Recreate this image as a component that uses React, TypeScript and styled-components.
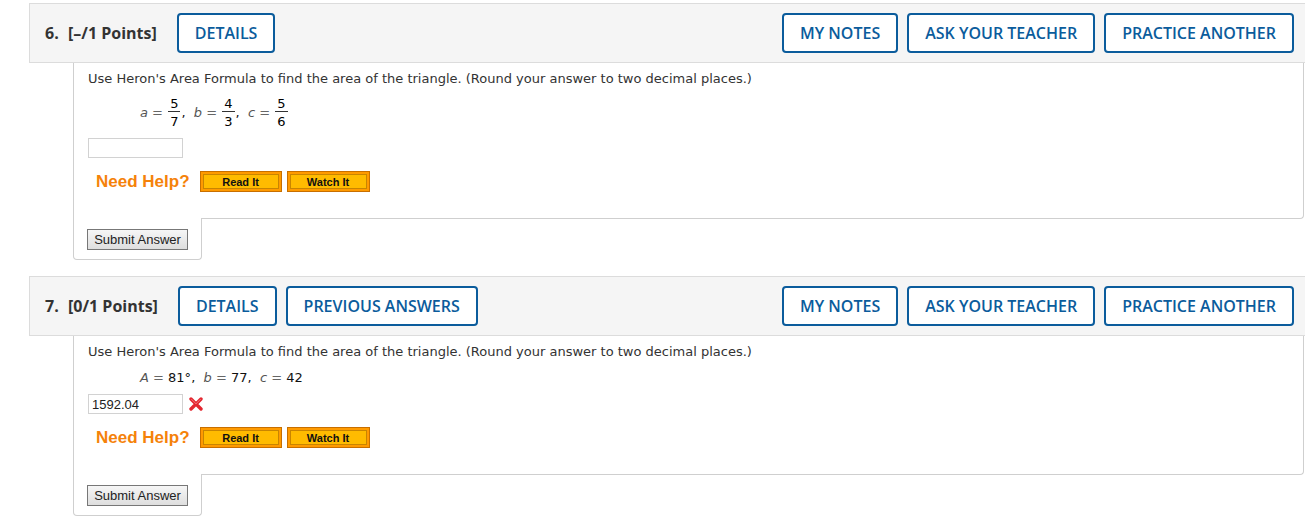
import React from "react";
import styled, { createGlobalStyle } from "styled-components";

const GlobalStyle = createGlobalStyle`
	html, body {
		margin: 0;
		padding: 0;
		background: #fff;
		overflow: hidden;
	}
	body {
		font-family: "Open Sans", "Liberation Sans", sans-serif;
	}
`;

const BLUE = "#0b5c9c";

type Term = { name: string; value?: string; num?: string; den?: string };

type QuestionData = {
	number: string;
	points: string;
	extraButton?: string;
	terms: Term[];
	answer: string;
	wrong: boolean;
};

const questions: QuestionData[] = [
	{
		number: "6.",
		points: "[–/1 Points]",
		terms: [
			{ name: "a", num: "5", den: "7" },
			{ name: "b", num: "4", den: "3" },
			{ name: "c", num: "5", den: "6" },
		],
		answer: "",
		wrong: false,
	},
	{
		number: "7.",
		points: "[0/1 Points]",
		extraButton: "PREVIOUS ANSWERS",
		terms: [
			{ name: "A", value: "81°" },
			{ name: "b", value: "77" },
			{ name: "c", value: "42" },
		],
		answer: "1592.04",
		wrong: true,
	},
];

const Page = styled.div`
	padding: 3px 0 0 29px;
	display: flex;
	flex-direction: column;
	gap: 16px;
`;

const Question = styled.section`
	width: 1278px;
	display: flex;
	flex-direction: column;
`;

const Header = styled.header`
	height: 60px;
	box-sizing: border-box;
	background: #f5f5f5;
	border: 1px solid #dcdcdc;
	display: flex;
	align-items: center;
	justify-content: space-between;
	padding: 0 12px 0 15px;
`;

const HeaderGroup = styled.div`
	display: flex;
	align-items: center;
	gap: 9px;
`;

const Title = styled.div`
	display: flex;
	align-items: center;
	color: #333;
	font-weight: 700;
	font-size: 16px;
	margin-right: 11px;
`;

const Num = styled.span`
	width: 23px;
`;

const HeaderButton = styled.button`
	height: 40px;
	box-sizing: border-box;
	border: 2px solid ${BLUE};
	border-radius: 4px;
	background: #fff;
	color: ${BLUE};
	font-family: "Open Sans", "Liberation Sans", sans-serif;
	font-weight: 600;
	font-size: 16px;
	padding: 0 16px;
	cursor: pointer;
`;

const Body = styled.div`
	margin: 0 3px 0 44px;
	border: 1px solid #cfcfcf;
	border-top: none;
	border-bottom-right-radius: 4px;
	padding: 8px 14px 26px;
	display: flex;
	flex-direction: column;
	align-items: flex-start;
`;

const Prompt = styled.p`
	margin: 0;
	font-family: "DejaVu Sans", Verdana, sans-serif;
	font-size: 13px;
	line-height: 16px;
	color: #333;
`;

const MathLine = styled.div<{ $tall?: boolean }>`
	margin: 10px 0 ${(p) => (p.$tall ? "10px" : "8px")} 52px;
	font-family: "DejaVu Sans", Verdana, sans-serif;
	font-size: 13px;
	line-height: 16px;
	color: #111;
	display: flex;
	align-items: center;
	white-space: pre;
`;

const Var = styled.i`
	color: #555;
`;

const Eq = styled.span`
	color: #666;
`;

const Fraction = styled.span`
	display: inline-flex;
	flex-direction: column;
	align-items: center;
	margin: 0 1px;
	font-size: 13px;
	line-height: 13px;
	color: #000;
`;

const FracTop = styled.span`
	padding: 0 2px 1px;
	border-bottom: 1px solid #333;
`;

const FracBottom = styled.span`
	padding-top: 3px;
`;

const AnswerRow = styled.div`
	display: flex;
	align-items: center;
	gap: 6px;
`;

const AnswerInput = styled.input`
	width: 95px;
	height: 20px;
	box-sizing: border-box;
	border: 1px solid #d2d2d2;
	padding: 0 3px;
	font-family: "Liberation Sans", Arial, sans-serif;
	font-size: 13px;
	color: #222;
	outline: none;
`;

const HelpRow = styled.div`
	margin: 13px 0 0 8px;
	display: flex;
	align-items: center;
`;

const NeedHelp = styled.span`
	font-family: "Liberation Sans", Arial, sans-serif;
	font-weight: 700;
	font-size: 17px;
	color: #f5820a;
	margin-right: 10px;
`;

const HelpButton = styled.button<{ $w: number }>`
	width: ${(p) => p.$w}px;
	height: 21px;
	box-sizing: border-box;
	margin-right: 5px;
	padding: 0;
	border: 1px solid #c86f00;
	background: #ffbb00;
	box-shadow: inset 0 0 0 2px #ff9a00, inset 0 0 0 3px #c98500;
	font-family: "Liberation Sans", Arial, sans-serif;
	font-weight: 700;
	font-size: 11px;
	color: #111;
	cursor: pointer;
`;

const SubmitTab = styled.div`
	align-self: flex-start;
	margin: -1px 0 0 44px;
	width: 129px;
	box-sizing: border-box;
	background: #fff;
	border: 1px solid #cfcfcf;
	border-top: none;
	border-radius: 0 0 4px 4px;
	padding: 11px 0 9px 13px;
	display: flex;
`;

const SubmitButton = styled.button`
	height: 21px;
	width: 101px;
	box-sizing: border-box;
	padding: 0;
	border: 1px solid #777;
	background: linear-gradient(#f6f6f6, #dedede);
	font-family: "Liberation Sans", Arial, sans-serif;
	font-size: 13px;
	color: #222;
	cursor: pointer;
`;

const WrongMark = () => (
	<svg width="14" height="14" viewBox="0 0 14 14">
		<path d="M2 2 L12 12 M12 2 L2 12" stroke="#e3262f" strokeWidth="3.4" strokeLinecap="round" />
		<path d="M2.6 2.4 L7 6.8 M11.4 2.4 L7 6.8" stroke="#ff8f95" strokeWidth="1" strokeLinecap="round" opacity="0.7" />
	</svg>
);

const MathTerms = ({ terms }: { terms: Term[] }) => (
	<>
		{terms.map((t, i) => (
			<React.Fragment key={t.name}>
				<Var>{t.name}</Var>
				<Eq> = </Eq>
				{t.num ? (
					<Fraction>
						<FracTop>{t.num}</FracTop>
						<FracBottom>{t.den}</FracBottom>
					</Fraction>
				) : (
					<span>{t.value}</span>
				)}
				{i < terms.length - 1 && <span>,  </span>}
			</React.Fragment>
		))}
	</>
);

const QuestionBlock = ({ q }: { q: QuestionData }) => (
	<Question>
		<Header>
			<HeaderGroup>
				<Title>
					<Num>{q.number}</Num>
					<span>{q.points}</span>
				</Title>
				<HeaderButton>DETAILS</HeaderButton>
				{q.extraButton && <HeaderButton>{q.extraButton}</HeaderButton>}
			</HeaderGroup>
			<HeaderGroup>
				<HeaderButton>MY NOTES</HeaderButton>
				<HeaderButton>ASK YOUR TEACHER</HeaderButton>
				<HeaderButton>PRACTICE ANOTHER</HeaderButton>
			</HeaderGroup>
		</Header>
		<Body>
			<Prompt>
				Use Heron's Area Formula to find the area of the triangle. (Round your answer to two decimal places.)
			</Prompt>
			<MathLine $tall={!!q.terms[0].num}>
				<MathTerms terms={q.terms} />
			</MathLine>
			<AnswerRow>
				<AnswerInput defaultValue={q.answer} />
				{q.wrong && <WrongMark />}
			</AnswerRow>
			<HelpRow>
				<NeedHelp>Need Help?</NeedHelp>
				<HelpButton $w={82}>Read It</HelpButton>
				<HelpButton $w={83}>Watch It</HelpButton>
			</HelpRow>
		</Body>
		<SubmitTab>
			<SubmitButton>Submit Answer</SubmitButton>
		</SubmitTab>
	</Question>
);

export default function App() {
	return (
		<>
			<GlobalStyle />
			<Page>
				{questions.map((q) => (
					<QuestionBlock key={q.number} q={q} />
				))}
			</Page>
		</>
	);
}
